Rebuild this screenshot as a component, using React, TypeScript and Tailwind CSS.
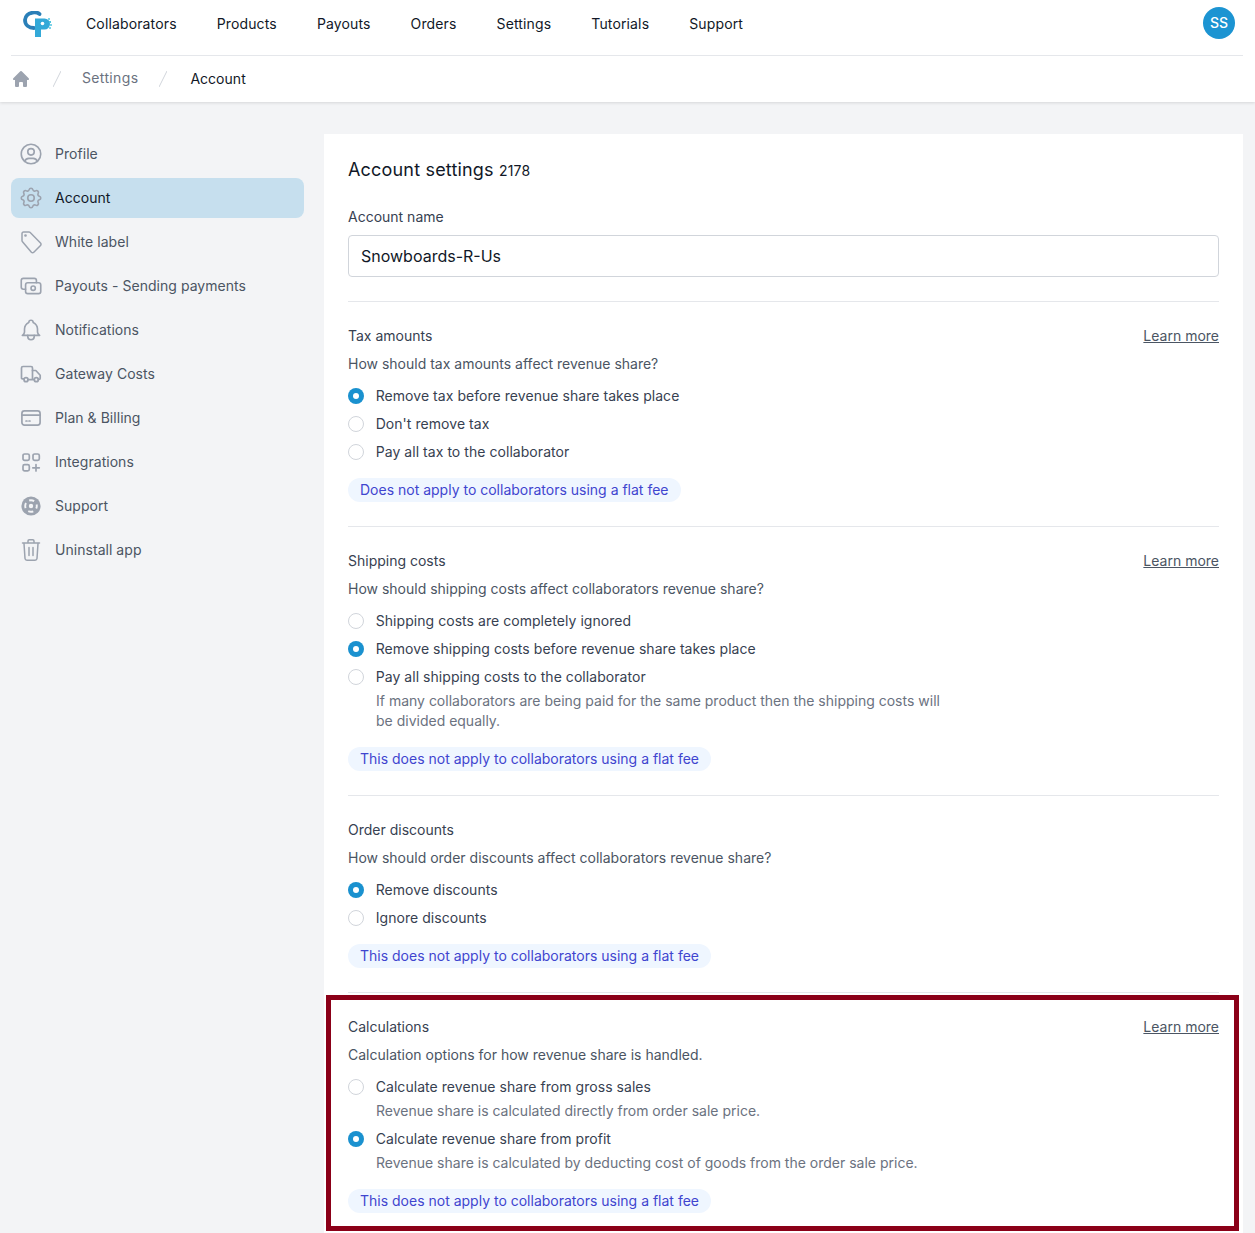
import React from "react";
import { TbUserCircle, TbSettings, TbCash, TbBell } from "react-icons/tb";

type IconProps = { className?: string; strokeWidth?: number };

function Card({ className }: IconProps) {
  return (
    <svg viewBox="0 0 26 26" fill="none" stroke="currentColor" strokeWidth="1.7" strokeLinecap="round" className={className}>
      <rect x="3.9" y="5.9" width="18.2" height="14.2" rx="2.5" />
      <path d="M3.9 10.2h18.2" />
      <path d="M8 16h1M11 16h1" />
    </svg>
  );
}
function Tag({ className }: IconProps) {
  return (
    <svg viewBox="0 0 26 26" fill="none" stroke="currentColor" strokeWidth="1.5" strokeLinejoin="round" className={className}>
      <path d="M4 4.5A1.5 1.5 0 0 1 5.5 3H11c.5 0 .9.2 1.2.5l10.3 10.6c.7.7.7 1.7 0 2.4l-6.7 6.7c-.7.7-1.7.7-2.4 0L4.5 12.8C4.2 12.5 4 12 4 11.5z" />
      <circle cx="7.5" cy="6.5" r=".6" fill="currentColor" />
    </svg>
  );
}
function Truck({ className }: IconProps) {
  return (
    <svg viewBox="0 0 26 26" fill="none" stroke="currentColor" strokeWidth="1.7" strokeLinecap="round" strokeLinejoin="round" className={className}>
      <path d="M14.5 18V7A1.5 1.5 0 0 0 13 5.5H5A1.5 1.5 0 0 0 3.5 7v9.5A1 1 0 0 0 4.5 17.8H6" />
      <circle cx="8" cy="18.7" r="2" />
      <circle cx="18.3" cy="18.7" r="2" />
      <path d="M10 18.7h6.3" />
      <path d="M14.5 9.5h3.3l4.4 4.8v3a1.2 1.2 0 0 1-1.2 1.2h-.7" />
    </svg>
  );
}
function Apps({ className }: IconProps) {
  return (
    <svg viewBox="0 0 26 26" fill="none" stroke="currentColor" strokeWidth="1.7" strokeLinecap="round" className={className}>
      <rect x="5" y="5" width="6.3" height="6.3" rx="1.6" />
      <rect x="15" y="5" width="6.3" height="6.3" rx="1.6" />
      <rect x="5" y="15.6" width="6.3" height="6.3" rx="1.6" />
      <path d="M18 15.6v6.3M14.8 18.8h6.5" />
    </svg>
  );
}
function Buoy({ className }: IconProps) {
  return (
    <svg viewBox="0 0 26 26" className={className}>
      <circle cx="13" cy="13" r="9.6" fill="currentColor" />
      <circle cx="13" cy="13" r="5.8" fill="none" stroke="#f3f4f6" strokeWidth="1.9" strokeDasharray="5.2 3.91" strokeDashoffset="2.6" />
      <circle cx="13" cy="13" r="2.2" fill="#f3f4f6" />
    </svg>
  );
}
function Trash({ className }: IconProps) {
  return (
    <svg viewBox="0 0 26 26" fill="none" stroke="currentColor" strokeWidth="1.5" strokeLinecap="round" strokeLinejoin="round" className={className}>
      <path d="M4.5 6h17" />
      <path d="M10 5.5V4a1.2 1.2 0 0 1 1.2-1.2h3.6A1.2 1.2 0 0 1 16 4v1.5" />
      <path d="M6 6.5l1 15a2 2 0 0 0 2 1.8h8a2 2 0 0 0 2-1.8l1-15" />
      <path d="M11 10.5v8M15 10.5v8" />
    </svg>
  );
}

const nav = ["Collaborators", "Products", "Payouts", "Orders", "Settings", "Tutorials", "Support"];
const side: [string, React.ComponentType<IconProps>, boolean?][] = [
  ["Profile", TbUserCircle],
  ["Account", TbSettings, true],
  ["White label", Tag],
  ["Payouts - Sending payments", TbCash],
  ["Notifications", TbBell],
  ["Gateway Costs", Truck],
  ["Plan & Billing", Card],
  ["Integrations", Apps],
  ["Support", Buoy],
  ["Uninstall app", Trash],
];

function Radio({ on, label }: { on?: boolean; label: string }) {
  return (
    <div className="flex items-center h-5 gap-3">
      <span className={on ? "w-4 h-4 rounded-full bg-[#1a91cf] flex items-center justify-center shrink-0" : "w-4 h-4 rounded-full border border-[#d1d5db] bg-white shrink-0"}>
        {on && <span className="w-1.5 h-1.5 rounded-full bg-white" />}
      </span>
      <span className="text-sm leading-5 text-[#374151] tracking-[0.05px] -ml-[0.3px]">{label}</span>
    </div>
  );
}

function Pill({ children }: { children: string }) {
  return <div className="mt-4 h-6 w-fit rounded-full bg-[#eff6ff] px-3 text-sm leading-6 text-[#3f45cf]">{children}</div>;
}

function Head({ title, desc, learn }: { title: string; desc: string; learn?: boolean }) {
  return (
    <>
      <div className="flex justify-between h-5 text-sm leading-5">
        <span className="text-[#374151]">{title}</span>
        {learn && <a className="text-[#4b5563] underline">Learn more</a>}
      </div>
      <p className="mt-2 text-sm leading-5 text-[#4b5563]">{desc}</p>
    </>
  );
}

function Help({ children }: { children: string }) {
  return <p className="mt-1 ml-7 max-w-xl text-sm leading-5 text-[#6b7280]">{children}</p>;
}

export default function App() {
  return (
    <div className="h-[1233px] overflow-hidden bg-[#f3f4f6] font-['Inter',sans-serif]">
      <header className="bg-white shadow-[0_1px_3px_rgba(0,0,0,0.12)]">
        <div className="ml-[11px] mr-3 h-14 border-b border-[#e5e7eb] flex items-start justify-between pr-2">
          <div className="flex items-start">
            <svg viewBox="0 0 30 27" className="w-[30px] h-[27px] ml-[11px] mt-[11px] shrink-0">
              <path d="M17.5 3A8.2 8.2 0 0 0 10 1.8 8 8 0 0 0 3 9c0 5 4 8 9 8" fill="none" stroke="#2a7fb8" strokeWidth="3.8" strokeLinecap="round" />
              <path d="M13 7.5h9.5a5.5 5.5 0 0 1 0 11H19v7.5h-6z" fill="#33a9d8" />
              <circle cx="20.5" cy="12.5" r="1.8" fill="#fff" />
              <rect x="27" y="10" width="2" height="2" fill="#4fc3dc" />
              <rect x="28" y="13" width="2" height="2" fill="#7dd3e8" />
              <rect x="26" y="7" width="2" height="2" fill="#7dd3e8" />
              <rect x="27" y="16" width="2" height="2" fill="#7dd3e8" />
            </svg>
            <nav className="ml-[34px] mt-3.5 flex gap-10 text-sm leading-5 text-[#111827] tracking-[0.01em]">
              {nav.map((n) => (
                <a key={n}>{n}</a>
              ))}
            </nav>
          </div>
          <div className="w-8 h-8 mt-[7px] rounded-full bg-[#1c94d2] text-white text-sm font-medium flex items-center justify-center">SS</div>
        </div>
        <div className="h-[46px] flex items-center pl-[13px] text-sm leading-5">
          <svg viewBox="0 0 20 20" fill="#9ca3af" className="w-4 h-4 shrink-0 scale-125">
            <path d="M10.7 2.3a1 1 0 0 0-1.4 0l-7 7A1 1 0 0 0 3 11h1v6a1 1 0 0 0 1 1h2a1 1 0 0 0 1-1v-3a1 1 0 0 1 1-1h2a1 1 0 0 1 1 1v3a1 1 0 0 0 1 1h2a1 1 0 0 0 1-1v-6h1a1 1 0 0 0 .7-1.7z" />
          </svg>
          <svg viewBox="0 0 8 20" className="ml-6 w-2 h-5 text-[#d1d5db]" fill="none" stroke="currentColor"><path d="M8 2 0 18" /></svg>
          <span className="ml-[21px] text-[#6b7280] mb-0.5 tracking-[0.35px]">Settings</span>
          <svg viewBox="0 0 8 20" className="ml-[21px] w-2 h-5 text-[#d1d5db]" fill="none" stroke="currentColor"><path d="M8 2 0 18" /></svg>
          <span className="ml-[23px] text-[#111827] tracking-[0.02px]">Account</span>
        </div>
      </header>

      <div className="mt-8 flex">
        <aside className="ml-[11px] w-[293px] shrink-0 flex flex-col gap-1">
          {side.map(([label, Icon, active]) => (
            <div key={label} className={active ? "h-10 flex items-center rounded-lg bg-[#c6dfee] pl-[7px] text-sm text-[#111827] tracking-[0.04px]" : "h-10 flex items-center rounded-lg pl-[7px] text-sm text-[#4b5563] tracking-[0.04px]"}>
              <Icon strokeWidth={1.5} className="w-[26px] h-[26px] shrink-0 text-[#9ca3af]" />
              <span className="ml-[11px]">{label}</span>
            </div>
          ))}
        </aside>

        <main className="ml-5 w-[919px] shrink-0 bg-white px-6 pt-6">
          <h1 className="text-lg leading-6 text-[#111827] tracking-[0.01em]">
            Account settings <span className="text-sm">2178</span>
          </h1>
          <label className="block mt-[25px] text-sm leading-5 text-[#374151]">Account name</label>
          <div className="mt-2 h-[42px] rounded border border-[#d1d5db] px-3 flex items-center text-base text-[#111827]">Snowboards-R-Us</div>

          <section className="mt-6 border-t border-[#e5e7eb] py-6">
            <Head title="Tax amounts" desc="How should tax amounts affect revenue share?" learn />
            <div className="mt-3 flex flex-col gap-2">
              <Radio on label="Remove tax before revenue share takes place" />
              <Radio label="Don't remove tax" />
              <Radio label="Pay all tax to the collaborator" />
            </div>
            <Pill>Does not apply to collaborators using a flat fee</Pill>
          </section>

          <section className="border-t border-[#e5e7eb] py-6">
            <Head title="Shipping costs" desc="How should shipping costs affect collaborators revenue share?" learn />
            <div className="mt-3 flex flex-col gap-2">
              <Radio label="Shipping costs are completely ignored" />
              <Radio on label="Remove shipping costs before revenue share takes place" />
              <div>
                <Radio label="Pay all shipping costs to the collaborator" />
                <Help>If many collaborators are being paid for the same product then the shipping costs will be divided equally.</Help>
              </div>
            </div>
            <Pill>This does not apply to collaborators using a flat fee</Pill>
          </section>

          <section className="border-t border-[#e5e7eb] py-6">
            <Head title="Order discounts" desc="How should order discounts affect collaborators revenue share?" />
            <div className="mt-3 flex flex-col gap-2">
              <Radio on label="Remove discounts" />
              <Radio label="Ignore discounts" />
            </div>
            <Pill>This does not apply to collaborators using a flat fee</Pill>
          </section>

          <section className="relative border-t border-[#e5e7eb] py-6">
            <Head title="Calculations" desc="Calculation options for how revenue share is handled." learn />
            <div className="mt-3 flex flex-col gap-2">
              <div>
                <Radio label="Calculate revenue share from gross sales" />
                <Help>Revenue share is calculated directly from order sale price.</Help>
              </div>
              <div>
                <Radio on label="Calculate revenue share from profit" />
                <Help>Revenue share is calculated by deducting cost of goods from the order sale price.</Help>
              </div>
            </div>
            <Pill>This does not apply to collaborators using a flat fee</Pill>
            <div className="absolute left-[-22px] right-[-20px] top-[2px] h-[236px] border-[5px] border-[#8b0018] pointer-events-none" />
          </section>
        </main>
      </div>
    </div>
  );
}
